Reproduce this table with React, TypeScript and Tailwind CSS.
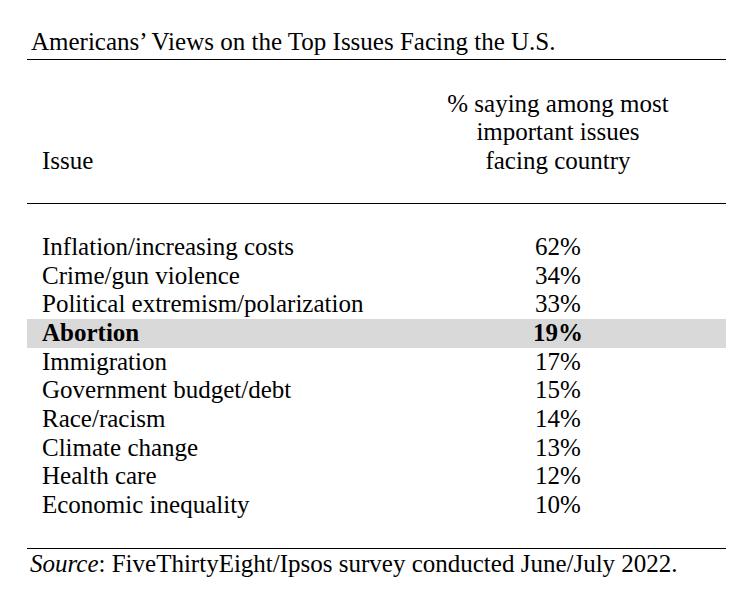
const rows = [
  { issue: "Inflation/increasing costs", pct: "62%" },
  { issue: "Crime/gun violence", pct: "34%" },
  { issue: "Political extremism/polarization", pct: "33%" },
  { issue: "Abortion", pct: "19%", highlight: true },
  { issue: "Immigration", pct: "17%" },
  { issue: "Government budget/debt", pct: "15%" },
  { issue: "Race/racism", pct: "14%" },
  { issue: "Climate change", pct: "13%" },
  { issue: "Health care", pct: "12%" },
  { issue: "Economic inequality", pct: "10%" },
];

export default function App() {
  return (
    <div className="h-[610px] w-[753px] bg-white font-['Liberation_Serif','Times_New_Roman',serif] text-[25px] leading-[28.7px] text-black">
      <div className="ml-[27px] w-[699px] pt-[28px]">
        {/* Title */}
        <div className="border-b border-black pb-[2px] pl-[4px]">
          Americans’ Views on the Top Issues Facing the U.S.
        </div>

        {/* Header */}
        <div className="flex items-end border-b border-black pb-[27px] pt-[30px]">
          <div className="flex-1 pl-[15px]">Issue</div>
          <div className="mr-[37px] w-[262px] text-center">
            % saying among most
            <br />
            important issues
            <br />
            facing country
          </div>
        </div>

        {/* Rows */}
        <div className="pt-[29px] pb-[28px]">
          {rows.map((r) => (
            <div
              key={r.issue}
              className={`flex ${r.highlight ? "bg-[#d9d9d9] font-bold" : ""}`}
            >
              <div className="flex-1 pl-[15px]">{r.issue}</div>
              <div className="mr-[37px] w-[262px] text-center">{r.pct}</div>
            </div>
          ))}
        </div>

        {/* Source */}
        <div className="border-t border-black pt-[1px] pl-[3px]">
          <i>Source</i>: FiveThirtyEight/Ipsos survey conducted June/July 2022.
        </div>
      </div>
    </div>
  );
}
